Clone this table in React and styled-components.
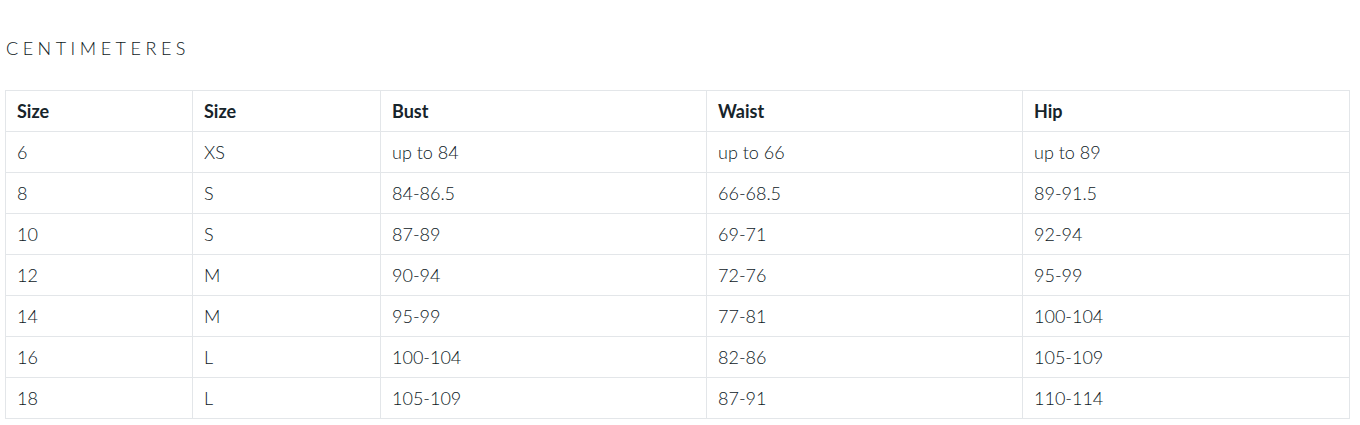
import React from 'react';
import styled, { createGlobalStyle } from 'styled-components';

const GlobalStyle = createGlobalStyle`
  body {
    margin: 0;
    background: #ffffff;
    font-family: Lato, "Open Sans", sans-serif;
    color: #1f2d33;
  }
`;

const COLUMNS = [
  { title: 'Size', width: 187 },
  { title: 'Size', width: 188 },
  { title: 'Bust', width: 326 },
  { title: 'Waist', width: 316 },
  { title: 'Hip', width: 327 },
];

const ROWS = [
  ['6', 'XS', 'up to 84', 'up to 66', 'up to 89'],
  ['8', 'S', '84-86.5', '66-68.5', '89-91.5'],
  ['10', 'S', '87-89', '69-71', '92-94'],
  ['12', 'M', '90-94', '72-76', '95-99'],
  ['14', 'M', '95-99', '77-81', '100-104'],
  ['16', 'L', '100-104', '82-86', '105-109'],
  ['18', 'L', '105-109', '87-91', '110-114'],
];

const App = () => (
  <Wrap>
    <GlobalStyle />
    <Heading>Centimeteres</Heading>
    <Table>
      <colgroup>
        {COLUMNS.map((col, i) => (
          <col key={i} style={{ width: col.width }} />
        ))}
      </colgroup>
      <thead>
        <tr>
          {COLUMNS.map((col, i) => (
            <HeadCell key={i}>{col.title}</HeadCell>
          ))}
        </tr>
      </thead>
      <tbody>
        {ROWS.map((row, r) => (
          <tr key={r}>
            {row.map((value, c) => (
              <Cell key={c}>{value}</Cell>
            ))}
          </tr>
        ))}
      </tbody>
    </Table>
  </Wrap>
);

const Wrap = styled.div`
  padding: 37px 0 0 5px;
`;

const Heading = styled.h2`
  margin: 0 0 31px 1px;
  font-size: 18px;
  font-weight: 300;
  line-height: 22px;
  letter-spacing: 4.5px;
  text-transform: uppercase;
  color: #0e181c;
`;

const Table = styled.table`
  width: 1344px;
  table-layout: fixed;
  border-collapse: collapse;
`;

const Cell = styled.td`
  height: 40px;
  padding: 0 11px;
  border: 1px solid #e3e6e9;
  font-size: 18px;
  font-weight: 300;
  color: #0c171d;
  vertical-align: middle;
  white-space: nowrap;
`;

const HeadCell = styled(Cell).attrs({ as: 'th' })`
  text-align: left;
  font-weight: 700;
  color: #17242b;
`;

export default App;
